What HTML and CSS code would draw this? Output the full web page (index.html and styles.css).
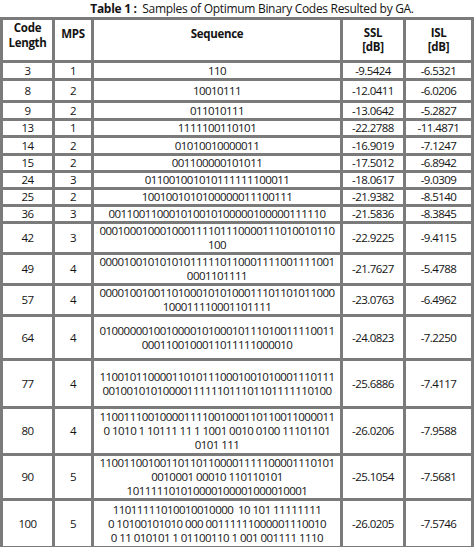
FILE: index.html
```html
<!DOCTYPE html>
<html>
<head>
<meta charset="utf-8">
<link rel="stylesheet" href="styles.css">
</head>
<body>
<div class="title"><b>Table 1 :</b>&nbsp; Samples of Optimum Binary Codes Resulted by GA.</div>
<table class="tbl">
<colgroup><col class="c1"><col class="c2"><col class="c3"><col class="c4"><col class="c5"></colgroup>
<tr class="hdr">
<th class="h-code">Code<br>Length</th>
<th class="h-mid">MPS</th>
<th class="h-mid">Sequence</th>
<th class="h-db">SSL<br>[dB]</th>
<th class="h-db">ISL<br>[dB]</th>
</tr>
<tr class="r18"><td>3</td><td>1</td><td>110</td><td>-9.5424</td><td>-6.5321</td></tr>
<tr class="r22"><td>8</td><td>2</td><td>10010111</td><td>-12.0411</td><td>-6.0206</td></tr>
<tr class="r18"><td>9</td><td>2</td><td>011010111</td><td>-13.0642</td><td>-5.2827</td></tr>
<tr class="r17"><td>13</td><td>1</td><td>1111100110101</td><td>-22.2788</td><td>-11.4871</td></tr>
<tr class="r18"><td>14</td><td>2</td><td>01010010000011</td><td>-16.9019</td><td>-7.1247</td></tr>
<tr class="r17"><td>15</td><td>2</td><td>001100000101011</td><td>-17.5012</td><td>-6.8942</td></tr>
<tr class="r17"><td>24</td><td>3</td><td>011001001010111111100011</td><td>-18.0617</td><td>-9.0309</td></tr>
<tr class="r17"><td>25</td><td>2</td><td>1001001010100000011100111</td><td>-21.9382</td><td>-8.5140</td></tr>
<tr class="r17"><td>36</td><td>3</td><td>001100110001010010100000100000111110</td><td>-21.5836</td><td>-8.3845</td></tr>
<tr class="r29"><td>42</td><td>3</td><td>000100010001000111101110000111010010110<br>100</td><td>-22.9225</td><td>-9.4115</td></tr>
<tr class="r31"><td>49</td><td>4</td><td>000010010101010111110110001111001111001<br>0001101111</td><td>-21.7627</td><td>-5.4788</td></tr>
<tr class="r30"><td>57</td><td>4</td><td>000010010011010001010100011101101011000<br>100011110001101111</td><td>-23.0763</td><td>-6.4962</td></tr>
<tr class="r44"><td>64</td><td>4</td><td>010000001001000010100010111010011110011<br>0001100100011011111000010</td><td>-24.0823</td><td>-7.2250</td></tr>
<tr class="r48"><td>77</td><td>4</td><td>110010110000110101110001001010001110111<br>00100101010000111111011101101111110100</td><td>-25.6886</td><td>-7.4117</td></tr>
<tr class="r47"><td>80</td><td>4</td><td>110011100100001111001000110110011000011<br>0 1010 1 10111 11 1 1001 0010 0100 11101101<br>0101 111</td><td>-26.0206</td><td>-7.9588</td></tr>
<tr class="r45"><td>90</td><td>5</td><td>110011001001101101100001111100001110101<br>0010001 00010 110110101<br>101111101010000100001000010001</td><td>-25.1054</td><td>-7.5681</td></tr>
<tr class="r48"><td>100</td><td>5</td><td>11011111010010010000&nbsp; 10 101 11111111<br>0 10100101010 000 00111111000001110010<br>0 11 010101 1 01100110 1 001 001111 1110</td><td>-26.0205</td><td>-7.5746</td></tr>
</table>
</body>
</html>
```
FILE: styles.css
```css
body {
  margin: 0;
  background: #ffffff;
  color: #141414;
  font-family: "Open Sans", "Noto Sans", sans-serif;
}

.title {
  height: 17px;
  padding-left: 30px;
  font-size: 12px;
  line-height: 17px;
  letter-spacing: -0.3px;
  text-align: center;
  white-space: nowrap;
}

.tbl {
  width: 474px;
  table-layout: fixed;
  border-collapse: separate;
  border-spacing: 0;
  border-top: 3px solid #7b7b7b;
  border-left: 3px solid #7b7b7b;
}

.c1 { width: 52px; }
.c2 { width: 39px; }
.c3 { width: 249px; }
.c4 { width: 63px; }
.c5 { width: 68px; }

.tbl td,
.tbl th {
  box-sizing: border-box;
  border-right: 3px solid #7b7b7b;
  border-bottom: 3px solid #7b7b7b;
  padding: 0 1px;
  text-align: center;
  vertical-align: middle;
  font-size: 11.5px;
  line-height: 14px;
  letter-spacing: -0.55px;
  white-space: nowrap;
}

.tbl th {
  font-weight: bold;
  vertical-align: top;
  letter-spacing: -0.3px;
}

.hdr { height: 43px; }
.tbl .h-code { padding-top: 0; line-height: 15px; }
.tbl .h-mid { padding-top: 7px; }
.tbl .h-db { padding-top: 6px; }

.r17 { height: 17px; }
.r18 { height: 18px; }
.r22 { height: 22px; }
.r29 { height: 29px; }
.r30 { height: 30px; }
.r31 { height: 31px; }
.r44 { height: 44px; }
.r45 { height: 45px; }
.r47 { height: 47px; }
.r48 { height: 48px; }
```
